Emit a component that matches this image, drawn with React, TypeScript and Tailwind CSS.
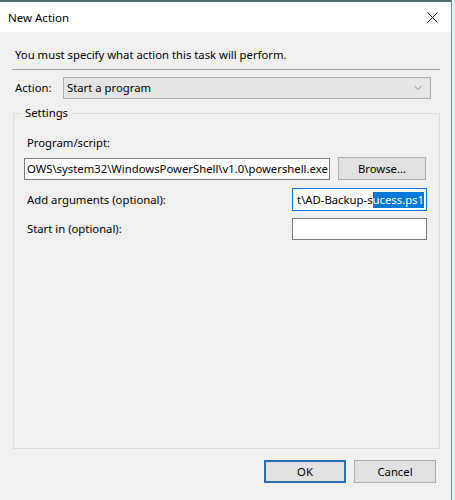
import { ChevronDown } from 'lucide-react'

const font = { fontFamily: '"Noto Sans", "Open Sans", sans-serif' }

function TextBox({ className = '', children }: { className?: string; children?: React.ReactNode }) {
  return (
    <div
      className={`h-[22px] bg-white border flex items-center justify-end overflow-hidden whitespace-nowrap px-[2px] ${className}`}
    >
      {children}
    </div>
  )
}

export default function App() {
  return (
    <div
      className="w-[455px] h-[500px] flex bg-[#e4eef0] text-[11.3px] leading-[16px] text-black overflow-hidden"
      style={font}
    >
      <div className="w-[451px] h-full flex flex-col bg-[#f0f0f0] border-t-2 border-[#4f6b6b]">
        {/* title bar */}
        <div className="h-[30px] bg-white flex items-center justify-between pl-[8px] pr-[12px] pt-[1px] shrink-0">
          <span className="text-[11.5px]">New Action</span>
          <svg width="11" height="11" viewBox="0 0 11 11" className="mr-[1px]">
            <path d="M0.5 0.5 L10.5 10.5 M10.5 0.5 L0.5 10.5" stroke="#111" strokeWidth="1" />
          </svg>
        </div>

        <div className="flex flex-col">
          <p className="pl-[15px] pt-[15px]">You must specify what action this task will perform.</p>
          <div className="ml-[12px] w-[428px] mt-[6px] border-t border-[#a8a8a8]" />

          <div className="flex items-center mt-[7px] pl-[15px]">
            <span className="w-[48px]">Action:</span>
            <div className="w-[368px] h-[22px] bg-[#e5e5e5] border border-[#adadad] flex items-center justify-between pl-[3px] pr-[6px]">
              <span>Start a program</span>
              <ChevronDown size={12} strokeWidth={1.25} color="#555" />
            </div>
          </div>

          <fieldset className="ml-[13px] w-[427px] h-[344px] mt-[6px] border border-[#dcdcdc] pl-[10px]">
            <legend className="ml-[-3px] px-[4px]">Settings</legend>
            <p className="ml-[3px] mt-[14px]">Program/script:</p>
            <div className="flex items-center gap-[8px] mt-[6px]">
              <TextBox className="w-[306px] border-[#7a7a7a] justify-start">
                <span>OWS\system32\WindowsPowerShell\v1.0\powershell.exe</span>
              </TextBox>
              <button
                type="button"
                className="w-[88px] h-[23px] bg-[#e1e1e1] border border-[#adadad]"
              >
                Browse...
              </button>
            </div>

            <div className="flex items-center justify-between mt-[8px] w-[403px]">
              <span className="ml-[3px]">Add arguments (optional):</span>
              <TextBox className="w-[135px] h-[23px] border-[#0078d7]">
                <span>t\AD-Backup-s</span>
                <span className="bg-[#0078d7] text-white">ucess.ps1</span>
              </TextBox>
            </div>

            <div className="flex items-center justify-between mt-[7px] w-[403px]">
              <span className="ml-[3px]">Start in (optional):</span>
              <TextBox className="w-[135px] border-[#7a7a7a]" />
            </div>
          </fieldset>

          <div className="flex justify-end gap-[8px] pr-[15px] mt-[11px]">
            <button
              type="button"
              className="w-[82px] h-[23px] bg-[#e1e1e1] border-2 border-[#2a6db0]"
            >
              OK
            </button>
            <button
              type="button"
              className="w-[82px] h-[23px] bg-[#e1e1e1] border border-[#adadad]"
            >
              Cancel
            </button>
          </div>
        </div>
      </div>
      <div className="w-[1px] h-full bg-[#5f9a9e]" />
    </div>
  )
}
